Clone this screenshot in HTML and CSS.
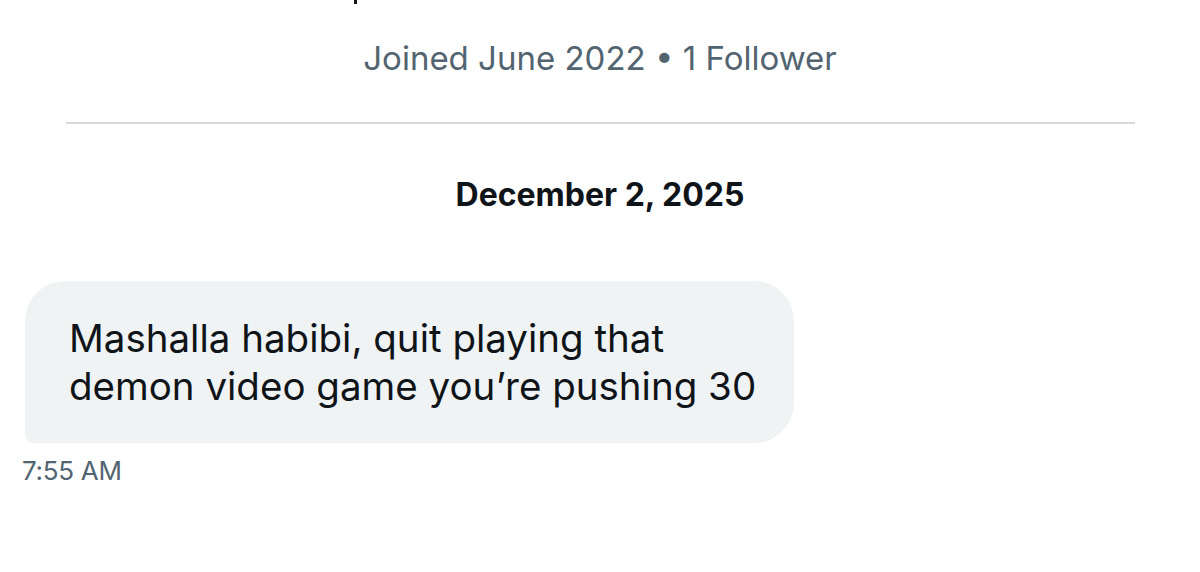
FILE: index.html
```html
<!DOCTYPE html>
<html lang="en">
<head>
<meta charset="utf-8">
<link rel="stylesheet" href="styles.css">
</head>
<body>
<div class="page">
  <span class="cut-mark"></span>
  <section class="profile">
    <p class="meta">Joined June 2022 • 1 Follower</p>
    <hr class="divider">
  </section>
  <section class="conversation">
    <h2 class="date">December 2, 2025</h2>
    <div class="message">
      <div class="bubble">Mashalla habibi, quit playing that<br>demon video game you’re pushing 30</div>
      <div class="time">7:55 AM</div>
    </div>
  </section>
</div>
</body>
</html>
```
FILE: styles.css
```css
html, body {
  margin: 0;
  padding: 0;
  background: #ffffff;
}
body {
  font-family: Inter, "Noto Sans", "Liberation Sans", sans-serif;
  color: #0f1419;
}
.page {
  position: relative;
  width: 1200px;
  height: 572px;
  overflow: hidden;
}
.cut-mark {
  position: absolute;
  left: 354px;
  top: 0;
  width: 3px;
  height: 4px;
  background: #0f1419;
}
.profile {
  padding-top: 38px;
}
.meta {
  margin: 0;
  text-align: center;
  font-size: 33px;
  line-height: 40px;
  color: #536471;
  letter-spacing: 0;
}
.divider {
  margin: 44px 65px 0 66px;
  border: 0;
  height: 2px;
  background: #d9d9d9;
}
.conversation {
  padding-top: 51px;
}
.date {
  margin: 0;
  text-align: center;
  font-size: 32px;
  line-height: 40px;
  font-weight: 700;
  color: #0f1419;
}
.message {
  padding-top: 66px;
  padding-left: 25px;
}
.bubble {
  box-sizing: border-box;
  width: 769px;
  height: 162px;
  padding: 33px 20px 0 44px;
  background: #eff3f4;
  border-radius: 40px 40px 40px 8px;
  font-size: 38.5px;
  line-height: 48px;
  letter-spacing: 0;
  color: #0f1419;
}
.time {
  margin-left: -3px;
  margin-top: 13px;
  font-size: 26px;
  line-height: 30px;
  color: #536471;
  letter-spacing: -0.3px;
}
```
